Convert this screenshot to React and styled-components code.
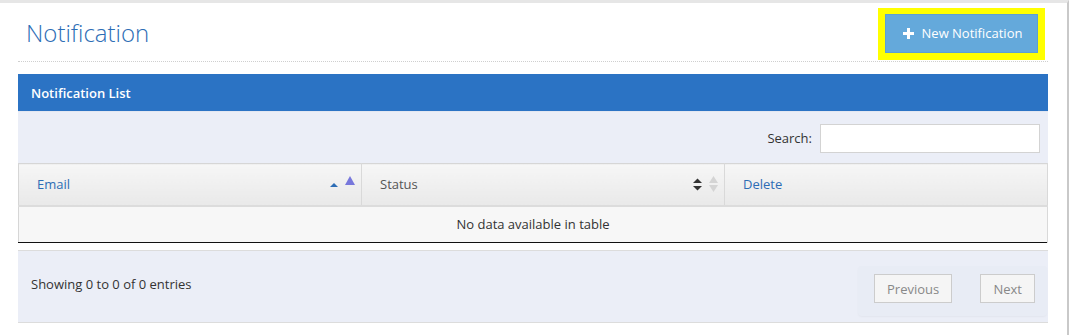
import React from 'react'
import styled, { createGlobalStyle } from 'styled-components'

const GlobalStyle = createGlobalStyle`
  body {
    margin: 0;
    background: #fff;
    font-family: "Open Sans", "Liberation Sans", sans-serif;
    color: #333;
  }
`

const SortIcons = ({ active }) => {
  if (active) {
    return (
      <Sorts>
        <svg width="8" height="5" viewBox="0 0 8 5"><path d="M0 5 L4 1 L8 5 Z" fill="#2d6db5" /></svg>
        <svg width="10" height="9" viewBox="0 0 10 9" style={{ marginTop: -8 }}><path d="M0 9 L5 0 L10 9 Z" fill="#7878dc" /></svg>
      </Sorts>
    )
  }
  return (
    <Sorts>
      <svg width="9" height="13" viewBox="0 0 9 13">
        <path d="M0 5 L4.5 0.5 L9 5 Z" fill="#333" />
        <path d="M0 8 L4.5 12.5 L9 8 Z" fill="#333" />
      </svg>
      <svg width="9" height="16" viewBox="0 0 9 16">
        <path d="M0 7 L4.5 0 L9 7 Z" fill="#d4d4d4" />
        <path d="M0 9 L4.5 16 L9 9 Z" fill="#d4d4d4" />
      </svg>
    </Sorts>
  )
}

const App = () => {
  return (
    <Page>
      <GlobalStyle />
      <Header>
        <Title>Notification</Title>
        <Highlight>
          <NewButton>
            <svg width="11" height="11" viewBox="0 0 11 11">
              <path d="M4 0 H7 V4 H11 V7 H7 V11 H4 V7 H0 V4 H4 Z" fill="#fff" />
            </svg>
            New Notification
          </NewButton>
        </Highlight>
      </Header>

      <Panel>
        <PanelTitle>Notification List</PanelTitle>
        <SearchBar>
          <label>Search:</label>
          <SearchInput type="text" />
        </SearchBar>
        <Table>
          <thead>
            <tr>
              <Th $width="343px" $link>
                <ThInner>Email<SortIcons active /></ThInner>
              </Th>
              <Th $width="363px">
                <ThInner>Status<SortIcons /></ThInner>
              </Th>
              <Th $link>
                <ThInner>Delete</ThInner>
              </Th>
            </tr>
          </thead>
          <tbody>
            <tr>
              <EmptyCell colSpan={3}>No data available in table</EmptyCell>
            </tr>
          </tbody>
        </Table>
        <Footer>
          <Info>Showing 0 to 0 of 0 entries</Info>
          <Pager>
            <PageButton>Previous</PageButton>
            <PageButton>Next</PageButton>
          </Pager>
        </Footer>
      </Panel>
    </Page>
  )
}

export default App

const Page = styled.div`
  height: 332px;
  border-top: 3px solid #e6e6e6;
  border-right: 2px solid #c9c9c9;
  padding: 0 19px 0 18px;
  box-sizing: content-box;
  width: 1030px;
`
const Header = styled.div`
  height: 58px;
  display: flex;
  justify-content: space-between;
  align-items: center;
  border-bottom: 1px dotted #cfcfcf;
  margin-bottom: 12px;
`
const Title = styled.h1`
  margin: 0 0 0 8px;
  font-size: 24px;
  font-weight: 300;
  color: #2d6db5;
  line-height: 1;
  padding-top: 1px;
`
const Highlight = styled.div`
  background: #ffff00;
  padding: 6px 7px 7px 7px;
  margin-right: 3px;
  margin-top: 5px;
  align-self: flex-start;
`
const NewButton = styled.button`
  width: 153px;
  height: 39px;
  background: #64a9db;
  border: 1px solid #5d9fd2;
  color: #fff;
  font-family: inherit;
  font-size: 13px;
  display: flex;
  align-items: center;
  justify-content: center;
  gap: 8px;
  padding: 0 0 1px 2px;
`
const Panel = styled.div`
  width: 1030px;
`
const PanelTitle = styled.div`
  height: 37px;
  background: #2b73c4;
  color: #fff;
  font-weight: 600;
  font-size: 13px;
  display: flex;
  align-items: center;
  padding-left: 13px;
  border-bottom: 1px solid #e3e7f1;
`
const SearchBar = styled.div`
  height: 51px;
  background: #ebeef7;
  display: flex;
  align-items: center;
  justify-content: flex-end;
  padding-right: 8px;
  gap: 8px;
  font-size: 13px;
  color: #333;
`
const SearchInput = styled.input`
  width: 220px;
  height: 29px;
  box-sizing: border-box;
  border: 1px solid #d3d3d3;
  background: #fff;
  margin-top: 1px;
`
const Table = styled.table`
  width: 1030px;
  border-collapse: collapse;
  border-left: 1px solid #d6d6d6;
  border-bottom: 1px solid #111;
  font-size: 13px;
`
const Th = styled.th`
  width: ${p => p.$width || 'auto'};
  height: 42px;
  padding: 0 0 0 18px;
  text-align: left;
  font-weight: 400;
  color: ${p => (p.$link ? '#2d6db5' : '#555')};
  background: linear-gradient(#f6f6f6, #e9e9e9);
  border-top: 1px solid #d6d6d6;
  border-right: 1px solid #d9d9d9;
  border-bottom: 2px solid #dcdcdc;
  box-sizing: border-box;
`
const ThInner = styled.div`
  display: flex;
  align-items: center;
  justify-content: space-between;
  padding-right: 6px;
`
const Sorts = styled.span`
  display: flex;
  align-items: center;
  gap: 7px;
`
const EmptyCell = styled.td`
  height: 37px;
  padding: 0;
  box-sizing: border-box;
  text-align: center;
  background: #f7f7f7;
  border-right: 1px solid #d9d9d9;
  color: #333;
`
const Footer = styled.div`
  margin-top: 7px;
  height: 71px;
  background: #ebeef7;
  border-top: 1px solid #dcdcdc;
  border-bottom: 1px solid #dcdcdc;
  display: flex;
  align-items: center;
  justify-content: space-between;
  padding-left: 13px;
`
const Info = styled.div`
  font-size: 13px;
  color: #333;
  margin-top: -6px;
`
const Pager = styled.div`
  width: 189px;
  height: 50px;
  box-sizing: border-box;
  background: #e8ecf5;
  border-radius: 4px;
  box-shadow: 0 1px 2px rgba(0, 0, 0, 0.04);
  display: flex;
  align-items: flex-start;
  justify-content: space-between;
  padding: 8px 12px 0 16px;
  margin-top: 9px;
  margin-right: 1px;
`
const PageButton = styled.button`
  height: 29px;
  padding: 0 12px;
  background: #f5f5f5;
  border: 1px solid #cccccc;
  color: #888;
  font-family: inherit;
  font-size: 13px;
`
